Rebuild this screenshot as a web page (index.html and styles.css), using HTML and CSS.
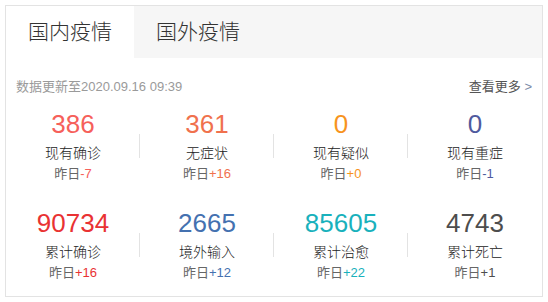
FILE: index.html
```html
<!DOCTYPE html>
<html lang="zh">
<head>
    <meta charset="UTF-8">
    <meta name="viewport" content="width=device-width, initial-scale=1.0">
    <title>疫情数据</title>
    <link rel="stylesheet" href="styles.css">
</head>
<body>
    <div class="box">
        <div class="tabs">
            <div class="tab active">国内疫情</div>
            <div class="tab">国外疫情</div>
        </div>
        <div class="meta">
            <span class="update">数据更新至2020.09.16 09:39</span>
            <span class="more">查看更多 <i>&gt;</i></span>
        </div>
        <div class="grid">
            <div class="cell c1">
                <div class="num">386</div>
                <div class="label">现有确诊</div>
                <div class="diff">昨日<em>-7</em></div>
            </div>
            <div class="cell c2">
                <div class="num">361</div>
                <div class="label">无症状</div>
                <div class="diff">昨日<em>+16</em></div>
            </div>
            <div class="cell c3">
                <div class="num">0</div>
                <div class="label">现有疑似</div>
                <div class="diff">昨日<em>+0</em></div>
            </div>
            <div class="cell c4">
                <div class="num">0</div>
                <div class="label">现有重症</div>
                <div class="diff">昨日<em>-1</em></div>
            </div>
            <div class="cell c5">
                <div class="num">90734</div>
                <div class="label">累计确诊</div>
                <div class="diff">昨日<em>+16</em></div>
            </div>
            <div class="cell c6">
                <div class="num">2665</div>
                <div class="label">境外输入</div>
                <div class="diff">昨日<em>+12</em></div>
            </div>
            <div class="cell c7">
                <div class="num">85605</div>
                <div class="label">累计治愈</div>
                <div class="diff">昨日<em>+22</em></div>
            </div>
            <div class="cell c8">
                <div class="num">4743</div>
                <div class="label">累计死亡</div>
                <div class="diff">昨日<em>+1</em></div>
            </div>
        </div>
    </div>
</body>
</html>
```

FILE: styles.css
```css
body {
    margin: 5px;
    font-family: "Liberation Sans", Arial, "Noto Sans CJK SC", sans-serif;
    background: #fff;
}
.box {
    width: 536px;
    border: 1px solid #e3e3e3;
    padding-bottom: 1px;
}
.tabs {
    display: flex;
    background: #f6f6f6;
    height: 52px;
}
.tab {
    width: 128px;
    line-height: 52px;
    text-align: center;
    font-size: 21px;
    color: #333;
    font-weight: 300;
}
.tab.active {
    background: #fff;
}
.meta {
    display: flex;
    justify-content: space-between;
    padding: 0 10px;
    margin-top: 19px;
    line-height: 20px;
    font-size: 13px;
}
.update {
    color: #9a9a9a;
}
.more {
    color: #555;
}
.more i {
    font-style: normal;
    color: #7a8aa8;
}
.grid {
    display: grid;
    grid-template-columns: repeat(4, 134px);
}
.cell {
    position: relative;
    text-align: center;
    padding: 12px 0;
}
.cell::after {
    content: "";
    position: absolute;
    right: 0;
    top: 37px;
    width: 1px;
    height: 24px;
    background: #e3e3e3;
}
.c4::after, .c8::after {
    display: none;
}
.num {
    font-size: 26px;
    line-height: 30px;
}
.label {
    margin-top: 4px;
    font-size: 14px;
    line-height: 20px;
    color: #222;
    font-weight: 300;
}
.diff {
    margin-top: 1px;
    font-size: 13px;
    line-height: 20px;
    color: #666;
}
.diff em {
    font-style: normal;
}
.c1 .num, .c1 em { color: #f6605a; }
.c2 .num, .c2 em { color: #f0714d; }
.c3 .num, .c3 em { color: #f7941d; }
.c4 .num, .c4 em { color: #4f5a9e; }
.c5 .num, .c5 em { color: #e93233; }
.c6 .num, .c6 em { color: #4471b0; }
.c7 .num, .c7 em { color: #19b1bc; }
.c8 .num, .c8 em { color: #4d4d4d; }
```
